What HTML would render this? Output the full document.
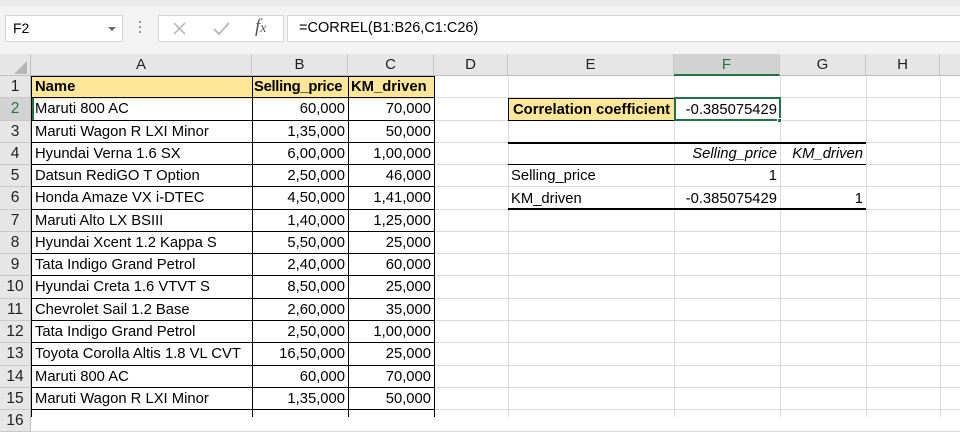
<!DOCTYPE html>
<html><head><style>
body{margin:0;width:960px;height:417px;overflow:hidden;background:#fff;font-family:"Liberation Sans",Arial,sans-serif;position:relative}
.a{position:absolute;box-sizing:border-box}
.t{position:absolute;box-sizing:border-box;font-size:14.8px;line-height:22px;white-space:nowrap;color:#000;padding:0 3px}
.r{text-align:right}
.ch{position:absolute;top:54px;height:22px;background:#e6e6e6;border-right:1px solid #c8c8c8;border-bottom:1px solid #bdbdbd;font-size:15px;text-align:center;line-height:22px;color:#222;box-sizing:border-box}
.rh{position:absolute;left:0;width:31px;background:#e6e6e6;border-bottom:1px solid #c8c8c8;border-right:1px solid #bdbdbd;font-size:15.5px;text-align:center;color:#222;box-sizing:border-box}
.hl{position:absolute;height:1px;background:#dadada}
.vl{position:absolute;width:1px;background:#dadada;top:76px;height:341px}
</style></head><body>
<div class="a" style="left:0;top:0;width:960px;height:54px;background:#f3f3f3"></div>
<div class="a" style="left:0;top:0;width:960px;height:6px;background:#e9e9e9"></div>
<div class="a" style="left:5px;top:15px;width:118px;height:27px;background:#fff;border:1px solid #d4d4d4"></div>
<div class="t" style="left:10px;top:17px;font-size:14px">F2</div>
<div class="a" style="left:108px;top:27px;border-left:4px solid transparent;border-right:4px solid transparent;border-top:4px solid #666"></div>
<div class="a" style="left:139px;top:21px;width:2px;height:2px;background:#999;box-shadow:0 5px #999,0 10px #999"></div>
<div class="a" style="left:158px;top:15px;width:126px;height:27px;background:#fff;border:1px solid #d4d4d4"></div>
<svg class="a" style="left:170px;top:20px" width="20" height="18"><path d="M4 3L15 14M15 3L4 14" stroke="#bbb" stroke-width="1.6"/></svg>
<svg class="a" style="left:210px;top:20px" width="24" height="18"><path d="M4 9L9 14L19 3" stroke="#bbb" stroke-width="2" fill="none"/></svg>
<div class="t" style="left:252px;top:16px;font-family:'Liberation Serif',serif;font-style:italic;font-size:19px;color:#555">f<span style="font-size:14px">x</span></div>
<div class="a" style="left:287px;top:15px;width:680px;height:27px;background:#fff;border:1px solid #d4d4d4"></div>
<div class="t" style="left:296px;top:17px;font-size:14.5px">=CORREL(B1:B26,C1:C26)</div>

<div class="a" style="left:0;top:54px;width:31px;height:22px;background:#e6e6e6;border-right:1px solid #bdbdbd;border-bottom:1px solid #bdbdbd"></div>
<div class="a" style="left:14px;top:61px;border-left:13px solid transparent;border-bottom:13px solid #b5b5b5"></div>
<div class="ch" style="left:31px;width:221px">A</div>
<div class="ch" style="left:252px;width:96px">B</div>
<div class="ch" style="left:348px;width:86px">C</div>
<div class="ch" style="left:434px;width:74px">D</div>
<div class="ch" style="left:508px;width:166px">E</div>
<div class="ch" style="left:674px;width:106px;background:#d2d2d2;color:#217346;border-bottom:2px solid #217346">F</div>
<div class="ch" style="left:780px;width:86px">G</div>
<div class="ch" style="left:866px;width:74px">H</div>
<div class="ch" style="left:940px;width:30px"></div>

<div class="vl" style="left:252px"></div><div class="vl" style="left:348px"></div><div class="vl" style="left:434px"></div><div class="vl" style="left:508px"></div><div class="vl" style="left:674px"></div><div class="vl" style="left:780px"></div><div class="vl" style="left:866px"></div><div class="vl" style="left:940px"></div>

<div id="rows"></div>
<script>
var names=["Name","Maruti 800 AC","Maruti Wagon R LXI Minor","Hyundai Verna 1.6 SX","Datsun RediGO T Option","Honda Amaze VX i-DTEC","Maruti Alto LX BSIII","Hyundai Xcent 1.2 Kappa S","Tata Indigo Grand Petrol","Hyundai Creta 1.6 VTVT S","Chevrolet Sail 1.2 Base","Tata Indigo Grand Petrol","Toyota Corolla Altis 1.8 VL CVT","Maruti 800 AC","Maruti Wagon R LXI Minor"];
var b=["Selling_price","60,000","1,35,000","6,00,000","2,50,000","4,50,000","1,40,000","5,50,000","2,40,000","8,50,000","2,60,000","2,50,000","16,50,000","60,000","1,35,000"];
var c=["KM_driven","70,000","50,000","1,00,000","46,000","1,41,000","1,25,000","25,000","60,000","25,000","35,000","1,00,000","25,000","70,000","50,000"];
var h="",H=22.27;
for(var i=0;i<16;i++){var y=76+i*H;
h+='<div class="rh" style="top:'+y+'px;height:'+H+'px;line-height:'+H+'px;'+(i==1?'background:#d2d2d2;color:#217346;':'')+'">'+(i+1)+'</div>';
h+='<div class="hl" style="left:31px;width:929px;top:'+(y+H-1)+'px"></div>';}
h+='<div class="a" style="left:31px;top:76px;width:404px;height:'+(H+1)+'px;background:#ffe699"></div>';
for(var i=0;i<15;i++){var y=76+i*H;var bd=i==0?'font-weight:bold;':'';
h+='<div class="t" style="left:32px;top:'+y+'px;'+bd+'">'+names[i]+'</div>';
h+='<div class="t r" style="left:252px;width:96px;top:'+y+'px;'+bd+(i==0?'text-align:left;letter-spacing:-0.3px;padding:0 2px;':'')+'">'+b[i]+'</div>';
h+='<div class="t r" style="left:348px;width:86px;top:'+y+'px;'+bd+(i==0?'text-align:left;':'')+'">'+c[i]+'</div>';
h+='<div class="a" style="left:31px;width:404px;height:1px;background:#000;top:'+(y+H-1)+'px"></div>';}
h+='<div class="a" style="left:31px;top:76px;width:404px;height:1px;background:#000"></div>';
[31,252,348,434].forEach(function(x){h+='<div class="a" style="left:'+x+'px;top:76px;width:1px;height:341px;background:#000"></div>'});
document.getElementById('rows').innerHTML=h;
</script>
<div class="a" style="left:32px;top:98px;width:2px;height:22px;background:#217346"></div>

<div class="a" style="left:508px;top:98px;width:167px;height:23px;background:#ffe699;border:1px solid #000"></div>
<div class="t" style="left:510px;top:98.5px;font-weight:bold">Correlation coefficient</div>
<div class="a" style="left:674px;top:97px;width:107px;height:24px;border:2px solid #217346;background:#fff"></div>
<div class="a" style="left:777px;top:118px;width:5px;height:5px;background:#217346;border:1px solid #fff"></div>
<div class="t r" style="left:674px;width:106px;top:98.5px">-0.385075429</div>

<div class="a" style="left:508px;top:141.5px;width:358px;height:2px;background:#000"></div>
<div class="a" style="left:508px;top:164px;width:358px;height:1px;background:#000"></div>
<div class="a" style="left:508px;top:208px;width:358px;height:2px;background:#000"></div>
<div class="t r" style="left:674px;width:106px;top:143px;font-style:italic">Selling_price</div>
<div class="t r" style="left:780px;width:86px;top:143px;font-style:italic">KM_driven</div>
<div class="t" style="left:508px;top:165px">Selling_price</div>
<div class="t r" style="left:674px;width:106px;top:165px">1</div>
<div class="t" style="left:508px;top:187.5px">KM_driven</div>
<div class="t r" style="left:674px;width:106px;top:187.5px">-0.385075429</div>
<div class="t r" style="left:780px;width:86px;top:187.5px">1</div>
</body></html>
